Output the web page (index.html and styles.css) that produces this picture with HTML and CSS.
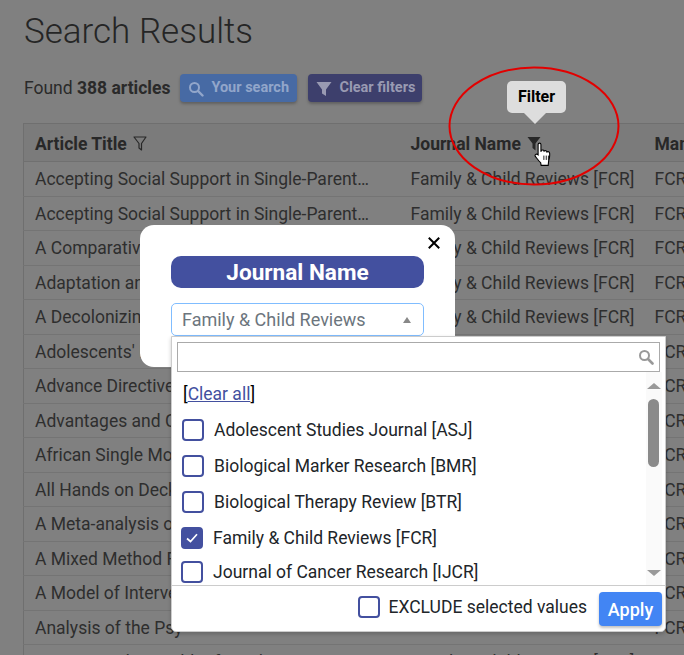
FILE: index.html
```html
<!DOCTYPE html>
<html lang="en">
<head>
<meta charset="utf-8">
<title>Search Results</title>
<link rel="stylesheet" href="styles.css">
</head>
<body>
<main class="page">
  <h1 class="title">Search Results</h1>
  <div class="summary">
    <span class="found">Found <b>388 articles</b></span>
    <button class="btn btn-search">
      <svg class="btn-icon" viewBox="0 0 16 16"><circle cx="6.5" cy="6.5" r="4.5" fill="none" stroke="currentColor" stroke-width="2"/><path d="M10 10l4.5 4.5" stroke="currentColor" stroke-width="2.4" stroke-linecap="round"/></svg>
      Your search
    </button>
    <button class="btn btn-clear">
      <svg class="btn-icon" viewBox="0 0 16 16"><path d="M0.5 1h15L10 8.5V15l-4-2.5V8.5z" fill="currentColor"/></svg>
      Clear filters
    </button>
  </div>
  <table class="results">
    <thead>
      <tr>
        <th class="col-title">Article Title <svg class="th-icon" viewBox="0 0 14 15"><path d="M1 1h12L8.5 7.5V14L6 12V7.5z" fill="none" stroke="currentColor" stroke-width="1.2" stroke-linejoin="round"/></svg></th>
        <th class="col-journal">Journal Name <svg class="th-icon" viewBox="0 0 14 15"><path d="M0.5 1h13L8.5 7.5V14.5L5.5 12V7.5z" fill="currentColor"/></svg></th>
        <th class="col-code">Manuscript</th>
      </tr>
    </thead>
    <tbody>
      <tr><td>Accepting Social Support in Single-Parent Families</td><td>Family &amp; Child Reviews [FCR]</td><td>FCR-1</td></tr>
      <tr><td>Accepting Social Support in Single-Parent Families</td><td>Family &amp; Child Reviews [FCR]</td><td>FCR-2</td></tr>
      <tr><td>A Comparative Study of Parenting</td><td>Family &amp; Child Reviews [FCR]</td><td>FCR-3</td></tr>
      <tr><td>Adaptation and Resilience in Families</td><td>Family &amp; Child Reviews [FCR]</td><td>FCR-4</td></tr>
      <tr><td>A Decolonizing Approach to Family Care</td><td>Family &amp; Child Reviews [FCR]</td><td>FCR-5</td></tr>
      <tr><td>Adolescents' Perceptions of Family</td><td>Family &amp; Child Reviews [FCR]</td><td>FCR-6</td></tr>
      <tr><td>Advance Directives in Family Care</td><td>Family &amp; Child Reviews [FCR]</td><td>FCR-7</td></tr>
      <tr><td>Advantages and Challenges of Kinship</td><td>Family &amp; Child Reviews [FCR]</td><td>FCR-8</td></tr>
      <tr><td>African Single Mothers and Support</td><td>Family &amp; Child Reviews [FCR]</td><td>FCR-9</td></tr>
      <tr><td>All Hands on Deck in Family Support</td><td>Family &amp; Child Reviews [FCR]</td><td>FCR-10</td></tr>
      <tr><td>A Meta-analysis of Family Programs</td><td>Family &amp; Child Reviews [FCR]</td><td>FCR-11</td></tr>
      <tr><td>A Mixed Method Review of Parenting</td><td>Family &amp; Child Reviews [FCR]</td><td>FCR-12</td></tr>
      <tr><td>A Model of Intervention for Families</td><td>Family &amp; Child Reviews [FCR]</td><td>FCR-13</td></tr>
      <tr><td>Analysis of the Psy</td><td></td><td>FCR-14</td></tr>
      <tr><td>Assessing the Health of Single-Parent Families</td><td>Family &amp; Child Reviews [FCR]</td><td>FCR-15</td></tr>
    </tbody>
  </table>
</main>

<svg class="callout" viewBox="0 0 174 122"><ellipse cx="87" cy="61" rx="84.5" ry="58.5" fill="none" stroke="#e20000" stroke-width="2"/></svg>
<div class="tooltip">Filter</div>
<svg class="hand" viewBox="0 0 16 23"><path d="M3.5 2.2c0-1.6 2.6-1.6 2.6 0V9l.3-1.2c1-.9 2.4-.5 2.6.6.9-.8 2.4-.4 2.6.8 1-.7 2.4-.2 2.5 1.2.2 2.4-.1 4.8-.9 6.8l-.4 4.3H6.3l-.5-2.5C4 17.5 2.7 15.5 1 13.3c-1-1.6.9-3 2.5-1.5z" fill="#fff" stroke="#000" stroke-width="1"/><path d="M8.8 12.5v4M11 12.5v4M13 12.5v4" stroke="#000" stroke-width=".8"/></svg>

<section class="modal">
  <button class="modal-close" aria-label="Close"><svg viewBox="0 0 12 12"><path d="M1.5 1.5l9 9M10.5 1.5l-9 9" stroke="#000" stroke-width="2" stroke-linecap="square"/></svg></button>
  <h2 class="modal-title">Journal Name</h2>
  <div class="select">
    <span>Family &amp; Child Reviews</span>
    <i class="select-caret"></i>
  </div>
</section>

<section class="dropdown">
  <div class="search-box">
    <svg class="search-icon" viewBox="0 0 16 16"><circle cx="6.5" cy="6.5" r="4.5" fill="none" stroke="#999" stroke-width="2"/><path d="M10 10l4.5 4.5" stroke="#999" stroke-width="2.6" stroke-linecap="round"/></svg>
  </div>
  <div class="list-wrap">
    <div class="list">
      <div class="clear-line">[<a href="#">Clear all</a>]</div>
      <label class="opt"><span class="box"></span>Adolescent Studies Journal [ASJ]</label>
      <label class="opt"><span class="box"></span>Biological Marker Research [BMR]</label>
      <label class="opt"><span class="box"></span>Biological Therapy Review [BTR]</label>
      <label class="opt opt-shift"><span class="box box-on"><svg viewBox="0 0 12 10"><path d="M1 5.5l3.5 3L11 1.2" fill="none" stroke="#fff" stroke-width="1.7"/></svg></span>Family &amp; Child Reviews [FCR]</label>
      <label class="opt opt-shift opt-last"><span class="box"></span>Journal of Cancer Research [IJCR]</label>
    </div>
    <div class="scrollbar">
      <i class="arrow-up"></i>
      <i class="thumb"></i>
      <i class="arrow-down"></i>
    </div>
  </div>
  <div class="drop-foot">
    <label class="exclude"><span class="box"></span>EXCLUDE selected values</label>
    <button class="apply">Apply</button>
  </div>
</section>
</body>
</html>
```
FILE: styles.css
```css
* { box-sizing: border-box; }
html, body { margin: 0; height: 655px; overflow: hidden; }
body {
  position: relative;
  background: #808080;
  color: #282828;
  font-family: Roboto, "Liberation Sans", sans-serif;
  font-size: 17.5px;
}
.page { padding: 11px 0 0 23px; width: 900px; }
.title {
  margin: 0 0 0 1px;
  font-size: 35px;
  line-height: 41px;
  font-weight: 300;
  color: #252525;
}
.summary {
  display: flex;
  align-items: center;
  gap: 11px;
  height: 28px;
  margin: 22px 0 21px 1px;
}
.found { font-size: 17.5px; margin-right: -1px; color: #2a2a2a; }
.found b { font-weight: 700; }
.btn {
  display: flex;
  align-items: center;
  gap: 7px;
  height: 28px;
  border: 0;
  border-radius: 4px;
  padding: 0 5px 1px 8px;
  font: 700 14.5px Roboto, sans-serif;
  white-space: nowrap;
  box-shadow: 0 2px 3px rgba(0,0,0,.25);
}
.btn-icon { width: 16px; height: 16px; margin-top: 2px; }
.btn-search { width: 117px; background: #476aa4; color: #92a6ca; }
.btn-clear { width: 114px; background: #3d3f6c; color: #999ab2; }
.results {
  border-collapse: collapse;
  table-layout: fixed;
  width: 780px;
  border-top: 1px solid #6f6f6f;
  border-left: 1px solid #6f6f6f;
}
.results th {
  height: 38px;
  padding: 3px 11px 0;
  text-align: left;
  font-weight: 700;
  font-size: 17.5px;
  background: #7b7b7b;
  border-bottom: 1px solid #707070;
  white-space: nowrap;
}
.th-icon { width: 14px; height: 15px; vertical-align: -1px; margin-left: 2px; }
.col-title { width: 376px; }
.col-journal { width: 244px; }
.col-code { width: 160px; }
.results td {
  height: 34.5px;
  padding: 1px 0 0 11px;
  border-bottom: 1px solid #747474;
  color: #2e2e2e;
  white-space: nowrap;
  overflow: hidden;
  text-overflow: ellipsis;
}
.results td:first-child { padding-right: 30px; }

.callout { position: absolute; left: 447px; top: 65px; width: 174px; height: 122px; }
.tooltip {
  position: absolute;
  left: 507px; top: 81px;
  width: 59px; height: 32px;
  background: #ddd;
  border-radius: 5px;
  color: #000;
  font-weight: 700;
  font-size: 16px;
  line-height: 31px;
  text-align: center;
}
.tooltip::after {
  content: "";
  position: absolute;
  left: 17px; top: 32px;
  border: 11px solid transparent;
  border-top-color: #ddd;
  border-bottom: 0;
}
.hand { position: absolute; left: 534px; top: 142px; width: 18px; height: 25px; }

.modal {
  position: absolute;
  left: 140px; top: 225px;
  width: 315px; height: 142px;
  background: #fff;
  border-radius: 14px;
  padding: 31px 31px 0;
}
.modal-close {
  position: absolute;
  right: 15px; top: 12px;
  width: 12px; height: 12px;
  padding: 0; border: 0; background: none;
  display: block;
}
.modal-close svg { display: block; }
.modal-title {
  margin: 0;
  height: 32px;
  border-radius: 10px;
  background: #43509f;
  color: #fff;
  font-size: 22.6px;
  font-weight: 700;
  line-height: 33px;
  text-align: center;
}
.select {
  display: flex;
  align-items: center;
  justify-content: space-between;
  height: 33px;
  margin-top: 15px;
  padding: 0 12px 0 10px;
  border: 1px solid #80bdff;
  border-radius: 5px;
  color: #6c757d;
  font-size: 18px;
}
.select-caret {
  border: 4.5px solid transparent;
  border-bottom: 6px solid #888;
  border-top: 0;
}

.dropdown {
  position: absolute;
  left: 171px; top: 336px;
  width: 495px; height: 296px;
  background: #fff;
  border: 1px solid #ccc;
  border-radius: 0 0 5px 5px;
  box-shadow: 0 2px 4px rgba(0,0,0,.2);
  padding: 5px 5px 0;
  display: flex;
  flex-direction: column;
  color: #212529;
}
.search-box {
  height: 30px;
  border: 1px solid #aaa;
  display: flex;
  align-items: center;
  justify-content: flex-end;
  padding-right: 5px;
  flex: none;
}
.search-icon { width: 16px; height: 16px; }
.list-wrap { display: flex; height: 213px; overflow: hidden; flex: none; margin-right: -2px; }
.list { flex: 1; overflow: hidden; padding: 10px 0 0 5px; }
.clear-line { font-size: 17.5px; line-height: 24px; margin-bottom: 13px; padding-left: 1px; color: #000; }
.clear-line a { color: #43509f; }
.opt {
  display: flex;
  align-items: center;
  gap: 10px;
  height: 22px;
  margin: 0 0 14px 0;
  font-size: 17.5px;
  white-space: nowrap;
}
.opt-shift { margin-left: -1px; }
.opt-last { margin: -2px 0 0 -1px; }
.box {
  display: flex;
  align-items: center;
  justify-content: center;
  flex: none;
  width: 22px; height: 22px;
  border: 2px solid #43509f;
  border-radius: 4px;
  background: #fff;
}
.box-on { background: #43509f; }
.box-on svg { width: 12px; height: 10px; }
.scrollbar {
  flex: none;
  position: relative;
  width: 16px;
  background: #fafafa;
}
.thumb {
  position: absolute;
  left: 2px; top: 27px;
  width: 11px; height: 68px;
  border-radius: 6px;
  background: #8a8a8a;
}
.arrow-up, .arrow-down { position: absolute; left: 1px; width: 0; height: 0; border: 7px solid transparent; }
.arrow-up { top: 11px; border-top: 0; border-bottom: 6px solid #999; }
.arrow-down { top: 198px; border-bottom: 0; border-top: 6px solid #999; }
.drop-foot {
  flex: 1;
  display: flex;
  align-items: flex-start;
  justify-content: flex-end;
  gap: 12px;
  border-top: 1px solid #ccc;
  margin: 0 -5px 0;
  padding: 6px 3px 0 0;
}
.exclude { display: flex; align-items: center; gap: 9px; font-size: 17.5px; height: 33px; padding-bottom: 3px; }
.apply {
  width: 63px; height: 34px;
  border: 0;
  border-radius: 4px;
  background: #4285f4;
  color: #fff;
  font: 500 18px Roboto, sans-serif;
  padding: 0;
  box-shadow: 0 2px 3px rgba(0,0,0,.25);
}
```
